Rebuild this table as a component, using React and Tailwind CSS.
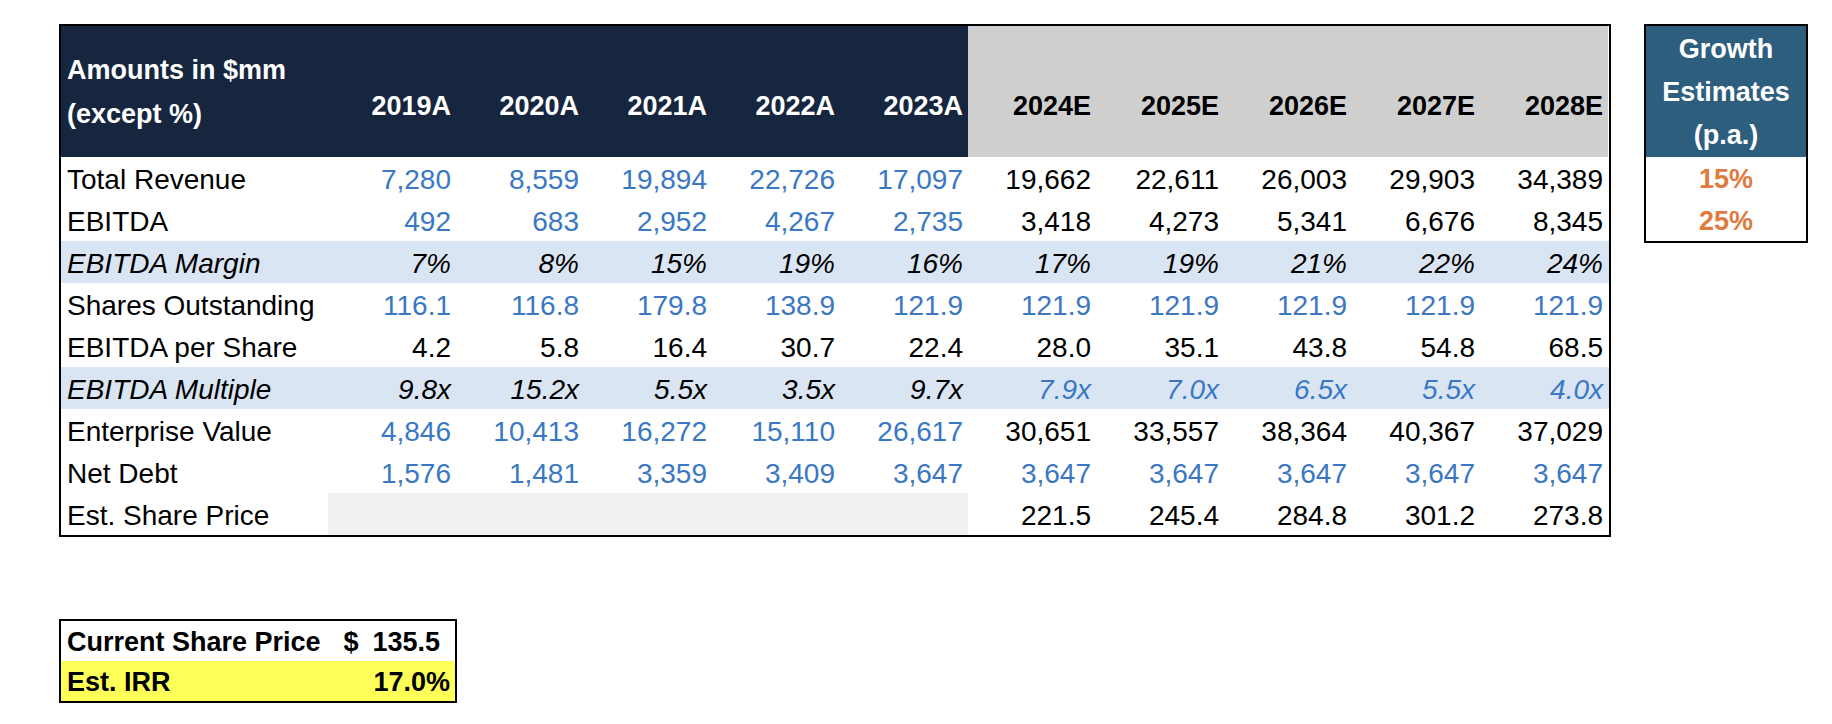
import React from 'react'

const actualYears = ['2019A', '2020A', '2021A', '2022A', '2023A']
const estYears = ['2024E', '2025E', '2026E', '2027E', '2028E']

// a = actual columns, e = estimate columns; null means an empty grey cell
const rows = [
  { label: 'Total Revenue', a: ['7,280', '8,559', '19,894', '22,726', '17,097'], e: ['19,662', '22,611', '26,003', '29,903', '34,389'], aBlue: true },
  { label: 'EBITDA', a: ['492', '683', '2,952', '4,267', '2,735'], e: ['3,418', '4,273', '5,341', '6,676', '8,345'], aBlue: true },
  { label: 'EBITDA Margin', a: ['7%', '8%', '15%', '19%', '16%'], e: ['17%', '19%', '21%', '22%', '24%'], shaded: true },
  { label: 'Shares Outstanding', a: ['116.1', '116.8', '179.8', '138.9', '121.9'], e: ['121.9', '121.9', '121.9', '121.9', '121.9'], aBlue: true, eBlue: true },
  { label: 'EBITDA per Share', a: ['4.2', '5.8', '16.4', '30.7', '22.4'], e: ['28.0', '35.1', '43.8', '54.8', '68.5'] },
  { label: 'EBITDA Multiple', a: ['9.8x', '15.2x', '5.5x', '3.5x', '9.7x'], e: ['7.9x', '7.0x', '6.5x', '5.5x', '4.0x'], shaded: true, eBlue: true },
  { label: 'Enterprise Value', a: ['4,846', '10,413', '16,272', '15,110', '26,617'], e: ['30,651', '33,557', '38,364', '40,367', '37,029'], aBlue: true },
  { label: 'Net Debt', a: ['1,576', '1,481', '3,359', '3,409', '3,647'], e: ['3,647', '3,647', '3,647', '3,647', '3,647'], aBlue: true, eBlue: true },
  { label: 'Est. Share Price', a: null, e: ['221.5', '245.4', '284.8', '301.2', '273.8'] },
]

function Cell({ value, blue }) {
  return (
    <div className={'w-[128px] flex items-center justify-end pr-[5px] pt-[3px] ' + (blue ? 'text-[#3a78c4]' : 'text-black')}>
      {value}
    </div>
  )
}

function Row({ row }) {
  return (
    <div className={'flex h-[42px] ' + (row.shaded ? 'bg-[#dae5f3] italic' : 'bg-white')}>
      <div className="w-[267px] flex items-center pl-[6px] pt-[3px]">{row.label}</div>
      {row.a ? (
        row.a.map((v, i) => <Cell key={i} value={v} blue={row.aBlue} />)
      ) : (
        <div className="w-[640px] bg-[#f0f0f0]" />
      )}
      {row.e.map((v, i) => (
        <Cell key={i} value={v} blue={row.eBlue} />
      ))}
    </div>
  )
}

export default function App() {
  return (
    <div className="min-h-screen bg-white pl-[59px] pt-[24px] font-['Liberation_Sans',Arial,sans-serif] text-[28px] leading-none text-black">
      <div className="flex items-start gap-[33px]">
        <div className="w-[1552px] border-2 border-black">
          <div className="flex h-[131px] font-bold text-[27px]">
            <div className="w-[267px] bg-[#17263f] text-white pl-[6px] flex flex-col justify-center leading-[44px]">
              <span>Amounts in $mm</span>
              <span>(except %)</span>
            </div>
            {actualYears.map((y) => (
              <div key={y} className="w-[128px] bg-[#17263f] text-white flex items-center justify-end pr-[5px] pt-[30px]">
                {y}
              </div>
            ))}
            {estYears.map((y) => (
              <div key={y} className="w-[128px] bg-[#cfcfcf] text-black flex items-center justify-end pr-[5px] pt-[30px]">
                {y}
              </div>
            ))}
          </div>
          {rows.map((r) => (
            <Row key={r.label} row={r} />
          ))}
        </div>

        <div className="w-[164px] border-2 border-black font-bold text-[27px] text-center">
          <div className="h-[131px] bg-[#2e5e7e] text-white flex flex-col justify-center leading-[43px] pt-[2px]">
            <span>Growth</span>
            <span>Estimates</span>
            <span>(p.a.)</span>
          </div>
          <div className="h-[42px] flex items-center justify-center pt-[3px] text-[#e07a3e]">15%</div>
          <div className="h-[42px] flex items-center justify-center pt-[3px] text-[#e07a3e]">25%</div>
        </div>
      </div>

      <div className="mt-[82px] w-[398px] border-2 border-black font-bold text-[27px]">
        <div className="h-[40px] flex items-center justify-between pl-[6px] pr-[15px] pt-[2px] bg-white">
          <span>Current Share Price</span>
          <span className="flex gap-[14px]">
            <span>$</span>
            <span>135.5</span>
          </span>
        </div>
        <div className="h-[40px] flex items-center justify-between pl-[6px] pr-[5px] pt-[2px] bg-[#ffff59]">
          <span>Est. IRR</span>
          <span>17.0%</span>
        </div>
      </div>
    </div>
  )
}
